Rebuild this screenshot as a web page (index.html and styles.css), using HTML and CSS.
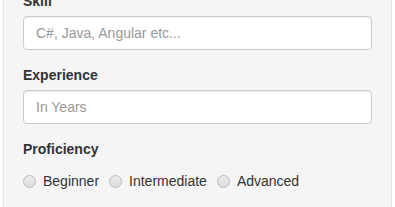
FILE: index.html
```html
<!DOCTYPE html>
<html>
<head>
<meta charset="utf-8">
<link rel="stylesheet" href="styles.css">
</head>
<body>
<div class="page">
  <form class="well">
    <div class="form-group">
      <label class="control-label">Skill</label>
      <input class="form-control" type="text" placeholder="C#, Java, Angular etc...">
    </div>
    <div class="form-group">
      <label class="control-label">Experience</label>
      <input class="form-control" type="text" placeholder="In Years">
    </div>
    <div class="form-group">
      <label class="control-label">Proficiency</label>
      <div class="radios">
        <label class="radio-inline"><input type="radio" name="p"><span>Beginner</span></label>
        <label class="radio-inline"><input type="radio" name="p"><span>Intermediate</span></label>
        <label class="radio-inline"><input type="radio" name="p"><span>Advanced</span></label>
      </div>
    </div>
  </form>
</div>
</body>
</html>
```
FILE: styles.css
```css
* { box-sizing: border-box; }
html, body { margin: 0; padding: 0; background: #fff; }
body {
  font-family: "Liberation Sans", Arial, sans-serif;
  font-size: 14px;
  line-height: 20px;
  color: #333;
  overflow: hidden;
}
.page {
  padding: 0 3px 0 3px;
  margin-top: -29px;
}
.well {
  display: block;
  background: #f5f5f5;
  border: 1px solid #e3e3e3;
  border-radius: 4px;
  padding: 19px;
  width: 389px;
  min-height: 240px;
}
.form-group { margin-bottom: 15px; }
.control-label {
  display: block;
  font-weight: bold;
  margin-bottom: 5px;
  line-height: 20px;
}
.form-control {
  display: block;
  width: 100%;
  height: 34px;
  padding: 6px 12px;
  font-family: "Liberation Sans", Arial, sans-serif;
  font-size: 14px;
  line-height: 20px;
  color: #555;
  background: #fff;
  border: 1px solid #ccc;
  border-radius: 4px;
  box-shadow: inset 0 1px 1px rgba(0,0,0,.075);
  outline: none;
}
.form-control::placeholder { color: #999; }
.radios {
  display: flex;
  padding-top: 7px;
}
.radio-inline {
  display: flex;
  align-items: center;
  line-height: 20px;
  height: 20px;
  margin-right: 10px;
}
.radio-inline input {
  -webkit-appearance: none;
  appearance: none;
  width: 13px;
  height: 13px;
  margin: 0 7px 0 0;
  border: 1px solid #b9b9b9;
  border-radius: 50%;
  background: linear-gradient(#ececec, #dcdcdc);
}
```
